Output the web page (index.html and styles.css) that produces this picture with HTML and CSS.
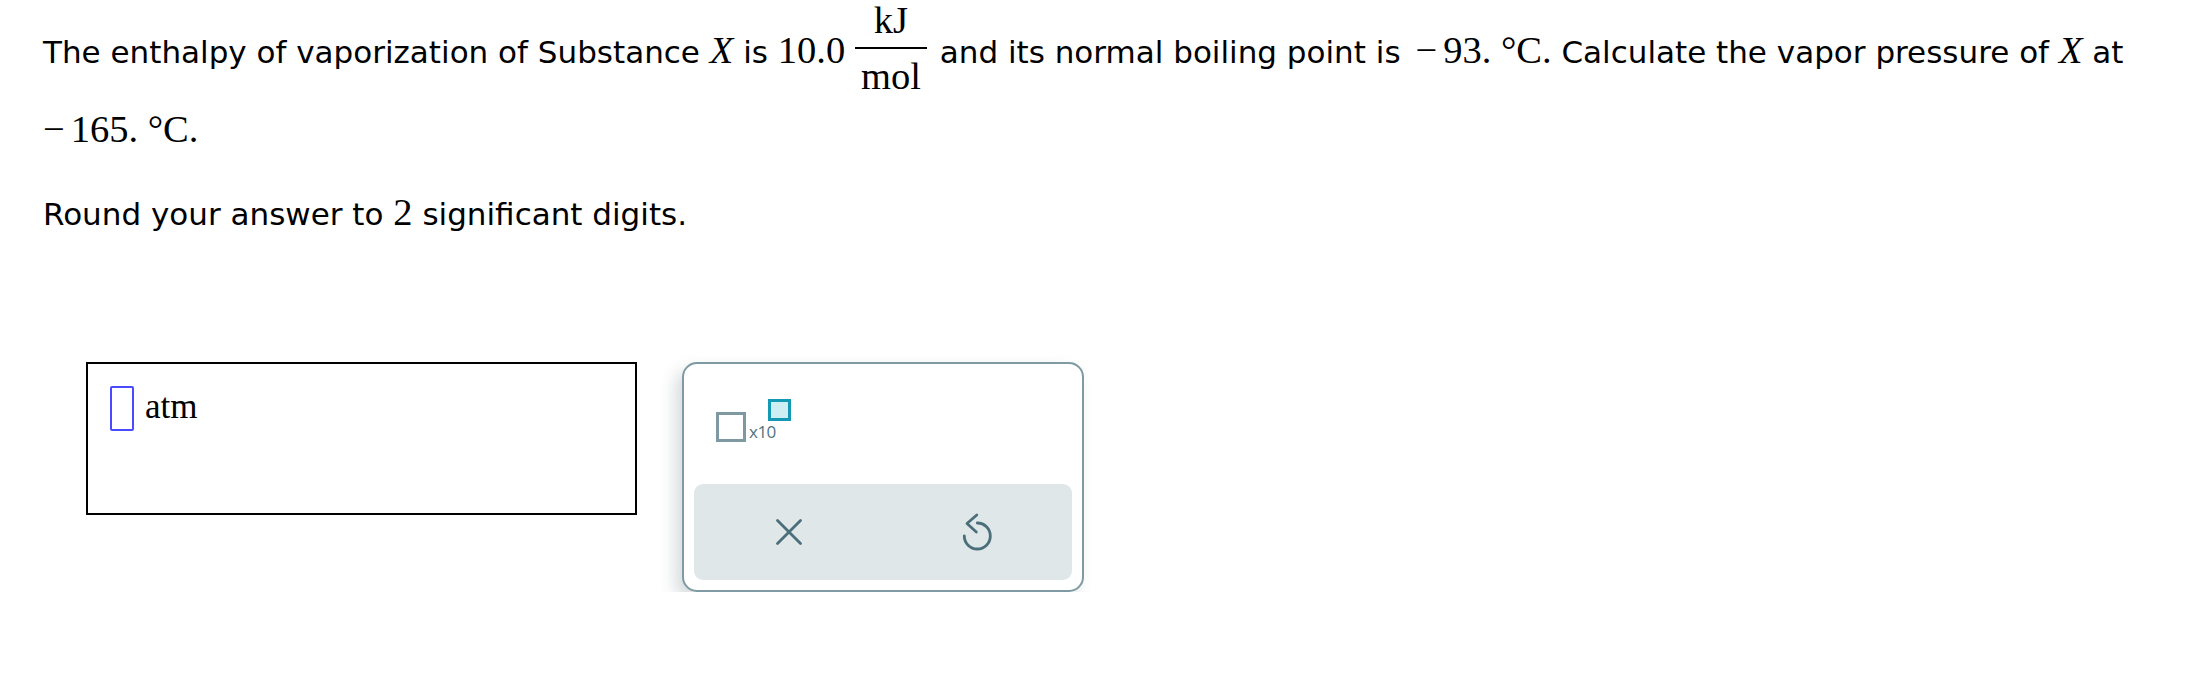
FILE: index.html
```html
<!DOCTYPE html>
<html lang="en">
<head>
<meta charset="utf-8">
<title>Vapor pressure</title>
<link rel="stylesheet" href="styles.css">
</head>
<body>
<div class="page">
  <p class="q">The enthalpy of vaporization of Substance <span class="m"><i>X</i></span> is <span class="m">10.0</span> <span class="frac"><span class="num m">kJ</span><span class="bar"></span><span class="den m">mol</span></span> and its normal boiling point is <span class="m lead"><span class="neg">−</span>93. °C.</span> Calculate the vapor pressure of <span class="m"><i>X</i></span> at <span class="m"><span class="neg">−</span>165. °C.</span></p>
  <p class="q2">Round your answer to <span class="m">2</span> significant digits.</p>
  <div class="work">
    <div class="answer">
      <span class="slot"></span>
      <span class="unit">atm</span>
    </div>
    <div class="pad">
      <div class="pad-top">
        <div class="x10" aria-label="scientific notation">
          <span class="sq"></span>
          <span class="t">x10</span>
          <span class="sup"></span>
        </div>
      </div>
      <div class="pad-bar">
        <div class="key">
          <svg class="ico-x" width="28" height="28" viewBox="0 0 28 28"><path d="M2.5 2.5 L25.5 25.5 M25.5 2.5 L2.5 25.5"/></svg>
        </div>
        <div class="key">
          <svg class="ico-undo" width="31" height="38" viewBox="0 0 31 38"><path d="M15.3 10 A13 13 0 1 1 2.3 23"/><path d="M14.8 2 L5 10.5 L14.3 19"/></svg>
        </div>
      </div>
    </div>
  </div>
</div>
</body>
</html>
```

FILE: styles.css
```css
html, body {
  margin: 0;
  padding: 0;
  background: #ffffff;
}

.page {
  padding: 1px 40px 0 43px;
  font-family: "DejaVu Sans", Verdana, sans-serif;
  font-size: 31px;
  color: #000;
}

.q {
  margin: 0;
  line-height: 48px;
}

.q2 {
  margin: 33px 0 0 0;
  line-height: 48px;
}

.m {
  font-family: "Liberation Serif", "Times New Roman", serif;
  font-size: 38.5px;
}

.m i {
  font-style: italic;
}

.lead {
  margin-left: 5px;
}

.neg {
  margin-right: 6px;
}

.frac {
  display: inline-flex;
  flex-direction: column;
  align-items: center;
  vertical-align: 30px;
  margin: 0 3px 10.25px 0;
}

.frac .num,
.frac .den {
  line-height: 38.5px;
  padding: 0 6px;
}

.frac .bar {
  align-self: stretch;
  height: 2px;
  background: #000;
  margin: 7.5px 0;
}

.work {
  display: flex;
  align-items: flex-start;
  gap: 45px;
  margin: 124px 0 0 43px;
}

.answer {
  box-sizing: border-box;
  width: 551px;
  height: 153px;
  border: 2px solid #000;
  padding: 22px;
  display: flex;
  align-items: flex-start;
}

.slot {
  box-sizing: border-box;
  width: 24px;
  height: 45px;
  border: 2px solid #4a4aff;
  border-radius: 2px;
}

.unit {
  font-family: "Liberation Serif", "Times New Roman", serif;
  font-size: 35px;
  line-height: 35px;
  margin: 3px 0 0 11px;
}

.pad {
  box-sizing: border-box;
  width: 402px;
  height: 230px;
  border: 2px solid #7e9aa3;
  border-radius: 15px;
  padding: 10px;
  display: flex;
  flex-direction: column;
  background: #fff;
  box-shadow: -7px 8px 16px rgba(40, 60, 70, 0.18);
}

.pad-top {
  flex: 1;
}

.x10 {
  position: relative;
  display: flex;
  align-items: flex-end;
  padding-top: 13px;
  margin: 25px 0 0 22px;
  width: 78px;
}

.x10 .sq {
  box-sizing: border-box;
  width: 30px;
  height: 30px;
  border: 3px solid #7f99a3;
}

.x10 .t {
  font-family: "Open Sans", sans-serif;
  font-size: 17px;
  line-height: 17px;
  letter-spacing: -0.5px;
  color: #4f7480;
  margin: 0 0 2px 3px;
}

.x10 .sup {
  position: absolute;
  top: 0;
  left: 52px;
  box-sizing: border-box;
  width: 23px;
  height: 22px;
  border: 3px solid #1499b4;
  background: #cdeef3;
}

.pad-bar {
  height: 96px;
  background: #dfe7e9;
  border-radius: 9px;
  display: grid;
  grid-template-columns: 1fr 1fr;
}

.key {
  display: flex;
  align-items: center;
  justify-content: center;
}

.key svg {
  fill: none;
  stroke: #4b6f7a;
  stroke-width: 2.8;
  stroke-linecap: round;
  stroke-linejoin: round;
}
```
